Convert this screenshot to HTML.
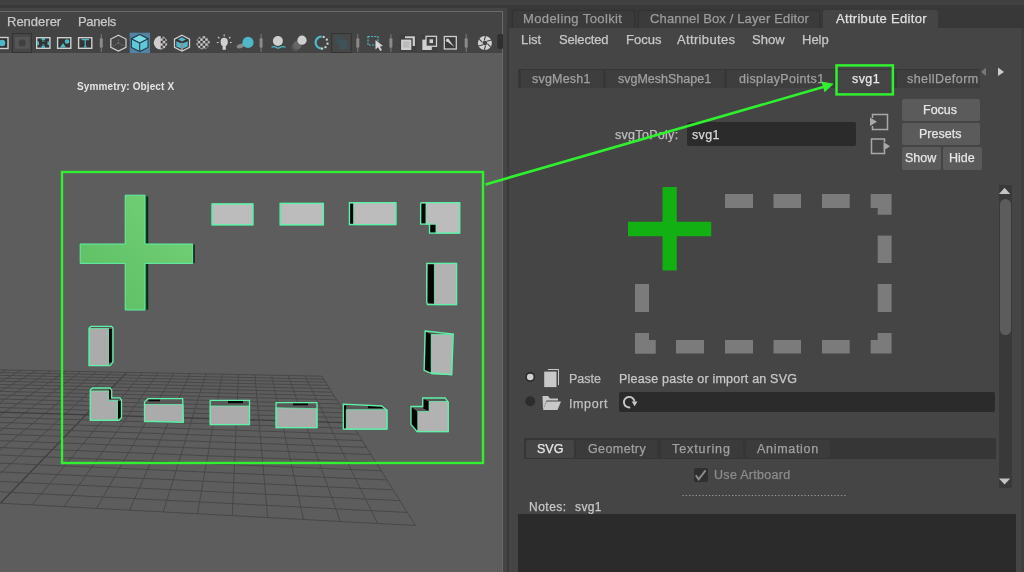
<!DOCTYPE html>
<html><head><meta charset="utf-8">
<style>
*{margin:0;padding:0;box-sizing:border-box}
html,body{width:1024px;height:572px;overflow:hidden;background:#444}
body{position:relative;font-family:"Liberation Sans",sans-serif;color:#c8c8c8}
.a{position:absolute}
.t{position:absolute;white-space:nowrap;line-height:1;will-change:transform;-webkit-text-stroke:0.25px currentColor}
svg{position:absolute;left:0;top:0}
.btn{position:absolute;background:#5b5b5b;border-radius:2px}
</style></head><body>
<!-- top strip -->
<div class="a" style="left:0;top:0;width:1024px;height:4.5px;background:#414141"></div>
<div class="a" style="left:0;top:4.5px;width:1024px;height:3.5px;background:#393939"></div>
<div class="a" style="left:0;top:8px;width:509px;height:3px;background:#444"></div>

<!-- LEFT PANEL -->
<div class="a" style="left:0;top:11px;width:503px;height:1px;background:#6a6a6a"></div>
<div class="a" style="left:502px;top:11px;width:1px;height:561px;background:#6a6a6a"></div>
<div class="a" style="left:0;top:12px;width:502px;height:41px;background:#444"></div>
<div class="a" style="left:0;top:53px;width:502px;height:519px;background:#5d5d5d"></div>
<div class="a" style="left:503px;top:8px;width:4px;height:564px;background:#444"></div>
<div class="a" style="left:507px;top:8px;width:2px;height:564px;background:#3a3a3a"></div>

<div class="t" style="left:7px;top:15px;font-size:13px">Renderer</div>
<div class="t" style="left:78px;top:15px;font-size:13px;letter-spacing:-0.3px">Panels</div>

<!-- toolbar icons -->
<svg width="503" height="60" viewBox="0 0 503 60">
<rect x="-6" y="37.5" width="14" height="11" fill="#2f2f2f" stroke="#cfcfcf" stroke-width="1.4"/>
<circle cx="2" cy="43" r="3.3" fill="#4fb8c8"/>
<rect x="12.5" y="33.5" width="19" height="19" fill="#474747" stroke="#323232" stroke-width="1"/>
<rect x="15" y="36.8" width="14.5" height="12" fill="#555"/>
<circle cx="22.2" cy="43" r="3.6" fill="#404040"/>
<rect x="36.7" y="37.7" width="13.2" height="10.6" fill="#333" stroke="#cfcfcf" stroke-width="1.4"/>
<rect x="41.5" y="38" width="3.5" height="2" fill="#4fb8c8"/><rect x="41.5" y="46" width="3.5" height="2" fill="#4fb8c8"/>
<rect x="37" y="41.5" width="2" height="3.5" fill="#4fb8c8"/><rect x="47.5" y="41.5" width="2" height="3.5" fill="#4fb8c8"/>
<rect x="42" y="40.5" width="2.5" height="1" fill="#4fb8c8"/><rect x="42" y="44.5" width="2.5" height="1" fill="#4fb8c8"/>
<rect x="57.6" y="37.7" width="13.2" height="10.6" fill="#333" stroke="#cfcfcf" stroke-width="1.4"/>
<polygon points="60,47.5 63,43 66,47.5" fill="#4fb8c8"/><circle cx="67" cy="41.5" r="2.3" fill="#4fb8c8"/>
<rect x="78.6" y="37.7" width="13.2" height="10.6" fill="#333" stroke="#cfcfcf" stroke-width="1.4"/>
<path d="M81.5,39.7 H89 M85.2,39.7 V46.8 M83.8,46.8 H86.6" stroke="#4fb8c8" stroke-width="1.2" fill="none"/>
<line x1="101.3" y1="34" x2="101.3" y2="52" stroke="#7a7a7a" stroke-width="1"/><rect x="99.8" y="38.3" width="3" height="9.4" rx="1" fill="#8a8a8a"/>
<polygon points="118.4,35.2 126,39 126,47.3 118.4,51 110.8,47.3 110.8,39" fill="none" stroke="#cfcfcf" stroke-width="1.2"/>
<path d="M118.4,43 V39 M118.4,43 L113,46 M118.4,43 L124,46" stroke="#8c8c8c" stroke-width="0.8" stroke-dasharray="1.2,1.2"/>
<rect x="129.7" y="32.7" width="20.3" height="20.3" fill="#5083a6"/>
<polygon points="139.7,34.5 148,38.7 148,47.5 139.7,51.6 131.4,47.5 131.4,38.7" fill="#5fc9d9" stroke="#2a3c44" stroke-width="1.1"/>
<path d="M131.4,38.7 L139.7,43 L148,38.7 M139.7,43 V51.6" stroke="#2a3c44" stroke-width="1.1" fill="none"/>
<polygon points="139.7,34.5 148,38.7 139.7,43 131.4,38.7" fill="#7adbe8"/>
<path d="M131.4,38.7 L139.7,34.5 L148,38.7 L139.7,43 Z" stroke="#2a3c44" stroke-width="1.1" fill="none"/>
<defs><pattern id="chk" x="0.3" y="0.8" width="5" height="5" patternUnits="userSpaceOnUse"><rect width="5" height="5" fill="#d0d0d0"/><rect width="2.5" height="2.5" fill="#333"/><rect x="2.5" y="2.5" width="2.5" height="2.5" fill="#333"/></pattern><clipPath id="cl1"><circle cx="160.6" cy="42.8" r="6.8"/></clipPath><clipPath id="cl2"><circle cx="203" cy="42.8" r="6.8"/></clipPath></defs>
<g clip-path="url(#cl1)"><rect x="153" y="35" width="16" height="16" fill="url(#chk)"/><rect x="153" y="35" width="7.6" height="16" fill="#cfcfcf"/></g>
<polygon points="182,35.2 189.5,39.2 189.5,47.3 182,51 174.5,47.3 174.5,39.2" fill="#333" stroke="#cfcfcf" stroke-width="1.3"/>
<polygon points="182,37.3 186,39.5 182,41.6 178,39.5" fill="#4fb8c8"/>
<polygon points="176.3,41.2 181,43.3 181,48.5 176.3,46.4" fill="#4fb8c8"/><polygon points="187.7,41.2 183,43.3 183,48.5 187.7,46.4" fill="#4fb8c8"/>
<path d="M182,42.8 V50.5" stroke="#cfcfcf" stroke-width="1.2"/>
<g clip-path="url(#cl2)"><rect x="195" y="35" width="16" height="16" fill="url(#chk)"/></g>
<ellipse cx="224.2" cy="42" rx="3.6" ry="4.2" fill="#cfcfcf"/><rect x="222.6" y="45" width="3.2" height="4.8" fill="#cfcfcf"/>
<path d="M224.2,34.5 V36.2 M218,37 L219.4,38.3 M230.4,37 L229,38.3 M216.8,42.5 H218.5 M230,42.5 H231.6" stroke="#cfcfcf" stroke-width="1.1"/>
<ellipse cx="240.5" cy="46" rx="4" ry="2" fill="#888" transform="rotate(-20 240.5 46)"/>
<circle cx="248" cy="42.4" r="5.6" fill="#4fb8c8"/>
<line x1="261.1" y1="34" x2="261.1" y2="52" stroke="#7a7a7a" stroke-width="1"/><rect x="259.6" y="38.3" width="3" height="9.4" rx="1" fill="#8a8a8a"/>
<circle cx="277.9" cy="41" r="5" fill="#cfcfcf"/>
<path d="M271.5,47.3 Q274,45.8 276,47.3 T280.5,47.3 T285.5,47.3" stroke="#4fb8c8" stroke-width="1.3" fill="none"/>
<circle cx="295.5" cy="47" r="4.2" fill="#555"/><circle cx="297.5" cy="45" r="4.2" fill="#666"/><circle cx="302" cy="40.2" r="4.6" fill="#cfcfcf"/>
<path d="M321.6,36.6 A6,6 0 0 0 321.6,48.6" stroke="#4fb8c8" stroke-width="2.2" fill="none"/>
<rect x="322.65212085995404" y="35.96184427528455" width="2" height="2" fill="#d8d8d8"/>
<rect x="325.79615242270665" y="38.6" width="2" height="2" fill="#d8d8d8"/>
<rect x="326.50884651807326" y="42.64188906600158" width="2" height="2" fill="#d8d8d8"/>
<rect x="324.45672565811924" y="46.19626665871387" width="2" height="2" fill="#d8d8d8"/>
<rect x="321.12293445648595" y="47.57716818855047" width="2" height="2" fill="#d8d8d8"/>
<rect x="331.7" y="33.5" width="19.5" height="19" fill="#474747" stroke="#323232" stroke-width="1"/>
<rect x="335.5" y="36.5" width="7" height="7" fill="#3d4f54"/><rect x="339" y="40" width="8.5" height="9" fill="#3e5257"/>
<line x1="357.8" y1="34" x2="357.8" y2="52" stroke="#7a7a7a" stroke-width="1"/><rect x="356.3" y="38.3" width="3" height="9.4" rx="1" fill="#8a8a8a"/>
<rect x="368" y="36.5" width="10" height="8.5" fill="none" stroke="#4fb8c8" stroke-width="1.2" stroke-dasharray="2,1.2"/>
<polygon points="375.5,40 375.5,49.5 378,47.3 380.3,51 382,50 379.8,46.5 383,46" fill="#d8d8d8"/>
<line x1="390.9" y1="34" x2="390.9" y2="52" stroke="#7a7a7a" stroke-width="1"/><rect x="389.4" y="38.3" width="3" height="9.4" rx="1" fill="#8a8a8a"/>
<rect x="399.7" y="34.7" width="16.8" height="17" fill="#3f3f3f"/>
<rect x="405" y="36.3" width="9.9" height="9.7" fill="#cfcfcf"/><rect x="403.2" y="38.2" width="9.5" height="9.5" fill="#3f3f3f"/>
<rect x="401.1" y="39.6" width="10.2" height="10.4" fill="#cfcfcf"/><rect x="403" y="41.2" width="6.5" height="6.5" fill="#bbb"/>
<rect x="421" y="34.7" width="17" height="17" fill="#3f3f3f"/>
<rect x="422.3" y="39.6" width="9.5" height="10.4" fill="#cfcfcf"/>
<rect x="426" y="36.3" width="10.5" height="10" fill="#3f3f3f" stroke="#cfcfcf" stroke-width="1.3"/><rect x="429.5" y="39.3" width="3.5" height="3.8" fill="#cfcfcf"/>
<rect x="443.6" y="35.8" width="13.4" height="13.9" fill="#3a3a3a"/><rect x="444.3" y="36.5" width="12" height="12.5" fill="none" stroke="#cfcfcf" stroke-width="1.3"/>
<circle cx="447.6" cy="40.2" r="1.7" fill="#cfcfcf"/><polygon points="446.8,41.3 448.8,39.5 454.5,47 " fill="#cfcfcf"/>
<line x1="466.2" y1="34" x2="466.2" y2="52" stroke="#7a7a7a" stroke-width="1"/><rect x="464.7" y="38.3" width="3" height="9.4" rx="1" fill="#8a8a8a"/>
<circle cx="484.9" cy="43" r="7" fill="#d2d2d2"/>
<line x1="487.41" y1="43.67" x2="490.79" y2="47.14" stroke="#444" stroke-width="1.1"/>
<line x1="485.57" y1="45.51" x2="484.27" y2="50.17" stroke="#444" stroke-width="1.1"/>
<line x1="483.06" y1="44.84" x2="478.37" y2="46.04" stroke="#444" stroke-width="1.1"/>
<line x1="482.39" y1="42.33" x2="479.01" y2="38.86" stroke="#444" stroke-width="1.1"/>
<line x1="484.23" y1="40.49" x2="485.53" y2="35.83" stroke="#444" stroke-width="1.1"/>
<line x1="486.74" y1="41.16" x2="491.43" y2="39.96" stroke="#444" stroke-width="1.1"/>
<circle cx="484.9" cy="43" r="2.3" fill="#444"/>
<rect x="497.3" y="34" width="6" height="15" rx="2" fill="#2f2f2f"/>
</svg>

<!-- viewport -->
<svg width="503" height="572" viewBox="0 0 503 572">
<g clip-path="url(#vpclip)">
<defs><clipPath id="vpclip"><rect x="0" y="53" width="502" height="519"/></clipPath></defs>
<line x1="322.00" y1="376.20" x2="415.49" y2="525.50" stroke="#484848" stroke-width="1"/>
<line x1="305.03" y1="375.87" x2="377.56" y2="523.46" stroke="#484848" stroke-width="1"/>
<line x1="288.19" y1="375.54" x2="340.29" y2="521.46" stroke="#484848" stroke-width="1"/>
<line x1="271.48" y1="375.21" x2="303.67" y2="519.49" stroke="#484848" stroke-width="1"/>
<line x1="254.90" y1="374.89" x2="267.67" y2="517.56" stroke="#484848" stroke-width="1"/>
<line x1="238.46" y1="374.57" x2="232.28" y2="515.65" stroke="#484848" stroke-width="1"/>
<line x1="222.15" y1="374.25" x2="197.48" y2="513.79" stroke="#484848" stroke-width="1"/>
<line x1="205.96" y1="373.93" x2="163.27" y2="511.95" stroke="#484848" stroke-width="1"/>
<line x1="189.90" y1="373.61" x2="129.62" y2="510.14" stroke="#484848" stroke-width="1"/>
<line x1="173.97" y1="373.30" x2="96.52" y2="508.36" stroke="#484848" stroke-width="1"/>
<line x1="158.16" y1="372.99" x2="63.96" y2="506.61" stroke="#484848" stroke-width="1"/>
<line x1="142.47" y1="372.68" x2="31.93" y2="504.89" stroke="#484848" stroke-width="1"/>
<line x1="126.90" y1="372.38" x2="0.40" y2="503.20" stroke="#3d3d3d" stroke-width="1.3"/>
<line x1="111.45" y1="372.08" x2="-30.62" y2="501.53" stroke="#484848" stroke-width="1"/>
<line x1="96.12" y1="371.78" x2="-61.15" y2="499.89" stroke="#484848" stroke-width="1"/>
<line x1="80.90" y1="371.48" x2="-91.20" y2="498.28" stroke="#484848" stroke-width="1"/>
<line x1="65.80" y1="371.18" x2="-120.79" y2="496.69" stroke="#484848" stroke-width="1"/>
<line x1="50.82" y1="370.89" x2="-149.93" y2="495.13" stroke="#484848" stroke-width="1"/>
<line x1="35.95" y1="370.60" x2="-178.61" y2="493.59" stroke="#484848" stroke-width="1"/>
<line x1="21.18" y1="370.31" x2="-206.87" y2="492.07" stroke="#484848" stroke-width="1"/>
<line x1="6.53" y1="370.02" x2="-234.70" y2="490.57" stroke="#484848" stroke-width="1"/>
<line x1="-8.01" y1="369.74" x2="-262.11" y2="489.10" stroke="#484848" stroke-width="1"/>
<line x1="-22.45" y1="369.45" x2="-289.12" y2="487.65" stroke="#484848" stroke-width="1"/>
<line x1="-36.77" y1="369.17" x2="-315.73" y2="486.22" stroke="#484848" stroke-width="1"/>
<line x1="-51.00" y1="368.89" x2="-341.95" y2="484.81" stroke="#484848" stroke-width="1"/>
<line x1="322.00" y1="376.20" x2="-51.00" y2="368.89" stroke="#484848" stroke-width="1"/>
<line x1="323.82" y1="379.10" x2="-57.23" y2="371.38" stroke="#484848" stroke-width="1"/>
<line x1="325.72" y1="382.14" x2="-63.73" y2="373.96" stroke="#484848" stroke-width="1"/>
<line x1="327.71" y1="385.32" x2="-70.51" y2="376.67" stroke="#484848" stroke-width="1"/>
<line x1="329.81" y1="388.66" x2="-77.61" y2="379.49" stroke="#484848" stroke-width="1"/>
<line x1="332.01" y1="392.18" x2="-85.03" y2="382.45" stroke="#484848" stroke-width="1"/>
<line x1="334.32" y1="395.87" x2="-92.80" y2="385.55" stroke="#484848" stroke-width="1"/>
<line x1="336.76" y1="399.77" x2="-100.95" y2="388.79" stroke="#484848" stroke-width="1"/>
<line x1="339.34" y1="403.89" x2="-109.50" y2="392.20" stroke="#484848" stroke-width="1"/>
<line x1="342.06" y1="408.24" x2="-118.48" y2="395.78" stroke="#484848" stroke-width="1"/>
<line x1="344.95" y1="412.84" x2="-127.94" y2="399.55" stroke="#484848" stroke-width="1"/>
<line x1="348.00" y1="417.72" x2="-137.90" y2="403.52" stroke="#484848" stroke-width="1"/>
<line x1="351.25" y1="422.91" x2="-148.41" y2="407.70" stroke="#3d3d3d" stroke-width="1.3"/>
<line x1="354.71" y1="428.43" x2="-159.52" y2="412.13" stroke="#484848" stroke-width="1"/>
<line x1="358.40" y1="434.32" x2="-171.27" y2="416.81" stroke="#484848" stroke-width="1"/>
<line x1="362.34" y1="440.61" x2="-183.73" y2="421.77" stroke="#484848" stroke-width="1"/>
<line x1="366.56" y1="447.36" x2="-196.96" y2="427.04" stroke="#484848" stroke-width="1"/>
<line x1="371.09" y1="454.60" x2="-211.03" y2="432.65" stroke="#484848" stroke-width="1"/>
<line x1="375.98" y1="462.39" x2="-226.03" y2="438.63" stroke="#484848" stroke-width="1"/>
<line x1="381.25" y1="470.81" x2="-242.06" y2="445.01" stroke="#484848" stroke-width="1"/>
<line x1="386.96" y1="479.93" x2="-259.21" y2="451.85" stroke="#484848" stroke-width="1"/>
<line x1="393.16" y1="489.84" x2="-277.63" y2="459.19" stroke="#484848" stroke-width="1"/>
<line x1="399.93" y1="500.65" x2="-297.44" y2="467.08" stroke="#484848" stroke-width="1"/>
<line x1="407.34" y1="512.48" x2="-318.81" y2="475.60" stroke="#484848" stroke-width="1"/>
<line x1="415.49" y1="525.50" x2="-341.95" y2="484.81" stroke="#484848" stroke-width="1"/>
</g>
<rect x="145" y="196" width="3.4" height="114" fill="#1d4d2a"/><rect x="146.6" y="197" width="1.2" height="112" fill="#0a1a0e"/>
<rect x="192.7" y="244.5" width="2" height="18.5" fill="#0a1a0e"/>
<defs><linearGradient id="pg" x1="1" y1="0" x2="0" y2="1"><stop offset="0" stop-color="#74d278"/><stop offset="1" stop-color="#5cbd62"/></linearGradient></defs>
<path d="M125.2,195.2 H145 V244 H192.7 V263.4 H145 V310 H125.2 V263.4 H80.2 V244 H125.2 Z" fill="url(#pg)" stroke="#5ef2a8" stroke-width="1"/>
<polygon points="212.1,203.9 252.9,203.9 252.9,224.9 212.1,224.9" fill="#585858"/>
<polygon points="212.1,203.9 252.9,203.9 252.9,224.9 212.1,224.9" fill="#bcbcbc"/>
<polygon points="212.1,203.9 252.9,203.9 252.9,224.9 212.1,224.9" fill="none" stroke="#5ef2a8" stroke-width="0.9" stroke-opacity="0.85"/>
<polygon points="212.1,203.9 252.9,203.9 252.9,224.9 212.1,224.9" fill="none" stroke="#5ef2a8" stroke-width="1.3"/>
<polygon points="280.1,203.3 323.4,203.3 323.4,224.9 280.1,224.9" fill="#585858"/>
<polygon points="280.6,203.3 323.2,203.3 323.2,224.9 280.6,224.9" fill="#bcbcbc"/>
<polygon points="280.6,203.3 323.2,203.3 323.2,224.9 280.6,224.9" fill="none" stroke="#5ef2a8" stroke-width="0.9" stroke-opacity="0.85"/>
<polygon points="280.1,203.3 323.4,203.3 323.4,224.9 280.1,224.9" fill="none" stroke="#5ef2a8" stroke-width="1.3"/>
<polygon points="349.4,202.6 395.9,202.6 395.9,224.7 349.4,224.7" fill="#585858"/>
<polygon points="350.2,204.0 353.5,204.0 353.5,223.5 350.2,223.5" fill="#050505"/>
<polygon points="353.7,202.6 395.9,202.6 395.9,224.7 353.7,224.7" fill="#bcbcbc"/>
<polygon points="353.7,202.6 395.9,202.6 395.9,224.7 353.7,224.7" fill="none" stroke="#5ef2a8" stroke-width="0.9" stroke-opacity="0.85"/>
<polygon points="349.4,202.6 395.9,202.6 395.9,224.7 349.4,224.7" fill="none" stroke="#5ef2a8" stroke-width="1.3"/>
<polygon points="420.6,203.5 421.5,202.6 459.7,202.6 459.7,233.2 429.5,233.2 429.5,224.2 420.6,224.2" fill="#585858"/>
<polygon points="421.3,204.0 425.8,204.0 425.8,223.5 421.3,223.5" fill="#050505"/>
<polygon points="430.2,224.8 435.8,224.8 435.8,232.6 430.2,232.6" fill="#050505"/>
<polygon points="426.0,202.6 459.7,202.6 459.7,233.2 436.0,233.2 436.0,224.2 426.0,224.2" fill="#bcbcbc"/>
<polygon points="426.0,202.6 459.7,202.6 459.7,233.2 436.0,233.2 436.0,224.2 426.0,224.2" fill="none" stroke="#5ef2a8" stroke-width="0.9" stroke-opacity="0.85"/>
<polygon points="420.6,203.5 421.5,202.6 459.7,202.6 459.7,233.2 429.5,233.2 429.5,224.2 420.6,224.2" fill="none" stroke="#5ef2a8" stroke-width="1.3"/>
<polygon points="426.7,263.4 456.6,263.4 456.6,304.7 427.5,304.7 426.7,302.0" fill="#585858"/>
<polygon points="428.0,264.5 434.2,264.5 434.2,303.5 427.3,302.5" fill="#050505"/>
<polygon points="434.4,263.4 456.6,263.4 456.6,304.7 434.4,304.7" fill="#b2b2b2"/>
<polygon points="434.4,263.4 456.6,263.4 456.6,304.7 434.4,304.7" fill="none" stroke="#5ef2a8" stroke-width="0.9" stroke-opacity="0.85"/>
<polygon points="426.7,263.4 456.6,263.4 456.6,304.7 427.5,304.7 426.7,302.0" fill="none" stroke="#5ef2a8" stroke-width="1.3"/>
<polygon points="425.1,331.0 453.3,334.1 451.7,374.7 429.1,372.7 424.1,370.3" fill="#585858"/>
<polygon points="425.8,332.0 431.0,334.3 431.0,373.0 425.0,370.0" fill="#050505"/>
<polygon points="431.2,334.5 452.5,334.5 451.7,374.7 431.2,374.0" fill="#b2b2b2"/>
<polygon points="431.2,334.5 452.5,334.5 451.7,374.7 431.2,374.0" fill="none" stroke="#5ef2a8" stroke-width="0.9" stroke-opacity="0.85"/>
<polygon points="425.1,331.0 453.3,334.1 451.7,374.7 429.1,372.7 424.1,370.3" fill="none" stroke="#5ef2a8" stroke-width="1.3"/>
<polygon points="422.7,398.0 445.2,398.0 448.3,402.5 448.3,431.7 417.1,431.7 411.0,424.6 411.0,406.5 422.7,406.5" fill="#585858"/>
<polygon points="423.3,399.0 428.9,401.5 428.9,411.0 423.3,408.5" fill="#050505"/>
<polygon points="429.1,401.5 448.3,401.5 448.3,431.7 417.5,431.7 417.5,411.5 429.1,411.5" fill="#b2b2b2"/>
<polygon points="429.1,401.5 448.3,401.5 448.3,431.7 417.5,431.7 417.5,411.5 429.1,411.5" fill="none" stroke="#5ef2a8" stroke-width="0.9" stroke-opacity="0.85"/>
<polygon points="422.7,398.0 445.2,398.0 448.3,402.5 448.3,431.7 417.1,431.7 411.0,424.6 411.0,406.5 422.7,406.5" fill="none" stroke="#5ef2a8" stroke-width="1.3"/>
<polygon points="411.8,407.2 417.3,411.5 417.3,430.5 411.8,424.0" fill="#050505"/>
<polygon points="343.3,404.2 381.7,406.0 387.0,410.3 387.0,429.2 343.3,429.2" fill="#585858"/>
<polygon points="343.9,405.5 346.2,405.5 346.2,428.3 343.9,428.3" fill="#050505"/>
<polygon points="368.0,406.0 383.0,406.0 383.0,408.2 368.0,408.2" fill="#050505"/>
<polygon points="346.3,409.7 387.0,409.7 387.0,429.2 346.3,429.2" fill="#ababab"/>
<polygon points="346.3,409.7 387.0,409.7 387.0,429.2 346.3,429.2" fill="none" stroke="#5ef2a8" stroke-width="0.9" stroke-opacity="0.85"/>
<polygon points="343.3,404.2 381.7,406.0 387.0,410.3 387.0,429.2 343.3,429.2" fill="none" stroke="#5ef2a8" stroke-width="1.3"/>
<polygon points="276.1,402.6 317.0,402.6 317.0,427.7 276.1,427.7" fill="#585858"/>
<polygon points="293.0,403.3 308.0,403.3 308.0,405.3 293.0,405.3" fill="#050505"/>
<polygon points="276.1,407.8 317.0,408.7 317.0,427.7 276.1,427.7" fill="#ababab"/>
<polygon points="276.1,407.8 317.0,408.7 317.0,427.7 276.1,427.7" fill="none" stroke="#5ef2a8" stroke-width="0.9" stroke-opacity="0.85"/>
<polygon points="276.1,402.6 317.0,402.6 317.0,427.7 276.1,427.7" fill="none" stroke="#5ef2a8" stroke-width="1.3"/>
<polygon points="210.2,400.4 249.5,400.4 249.5,424.6 210.2,424.6" fill="#585858"/>
<polygon points="228.0,401.0 243.0,401.0 243.0,403.2 228.0,403.2" fill="#050505"/>
<polygon points="210.2,406.0 249.5,406.0 249.5,424.6 210.2,424.6" fill="#ababab"/>
<polygon points="210.2,406.0 249.5,406.0 249.5,424.6 210.2,424.6" fill="none" stroke="#5ef2a8" stroke-width="0.9" stroke-opacity="0.85"/>
<polygon points="210.2,400.4 249.5,400.4 249.5,424.6 210.2,424.6" fill="none" stroke="#5ef2a8" stroke-width="1.3"/>
<polygon points="144.5,402.1 147.9,398.7 182.7,398.7 183.3,422.3 144.5,421.2" fill="#585858"/>
<polygon points="148.5,399.4 160.0,399.4 160.0,401.3 148.5,401.3" fill="#050505"/>
<polygon points="144.5,404.5 183.0,404.5 183.0,421.8 144.5,421.8" fill="#ababab"/>
<polygon points="144.5,404.5 183.0,404.5 183.0,421.8 144.5,421.8" fill="none" stroke="#5ef2a8" stroke-width="0.9" stroke-opacity="0.85"/>
<polygon points="144.5,402.1 147.9,398.7 182.7,398.7 183.3,422.3 144.5,421.2" fill="none" stroke="#5ef2a8" stroke-width="1.3"/>
<polygon points="90.3,390.0 92.5,388.0 110.0,388.0 111.7,390.0 111.7,397.9 120.0,397.9 121.5,400.0 121.5,417.5 119.0,420.3 90.3,420.3" fill="#585858"/>
<polygon points="109.0,389.5 111.2,389.5 111.2,399.0 109.0,399.0" fill="#050505"/>
<polygon points="118.0,401.0 121.0,401.0 121.0,418.5 118.0,418.5" fill="#050505"/>
<polygon points="90.3,391.0 108.5,391.0 108.5,400.5 117.5,400.5 117.5,420.3 90.3,420.3" fill="#ababab"/>
<polygon points="90.3,391.0 108.5,391.0 108.5,400.5 117.5,400.5 117.5,420.3 90.3,420.3" fill="none" stroke="#5ef2a8" stroke-width="0.9" stroke-opacity="0.85"/>
<polygon points="90.3,390.0 92.5,388.0 110.0,388.0 111.7,390.0 111.7,397.9 120.0,397.9 121.5,400.0 121.5,417.5 119.0,420.3 90.3,420.3" fill="none" stroke="#5ef2a8" stroke-width="1.3"/>
<polygon points="89.0,328.3 91.0,326.4 111.6,326.4 113.0,328.0 113.0,362.0 110.0,365.7 89.0,365.7" fill="#585858"/>
<polygon points="109.0,329.0 111.8,329.0 111.8,362.5 109.0,362.5" fill="#050505"/>
<polygon points="89.5,328.5 108.5,328.5 108.5,365.5 89.5,365.5" fill="#ababab"/>
<polygon points="89.5,328.5 108.5,328.5 108.5,365.5 89.5,365.5" fill="none" stroke="#5ef2a8" stroke-width="0.9" stroke-opacity="0.85"/>
<polygon points="89.0,328.3 91.0,326.4 111.6,326.4 113.0,328.0 113.0,362.0 110.0,365.7 89.0,365.7" fill="none" stroke="#5ef2a8" stroke-width="1.3"/>
</svg>

<div class="t" style="left:77.3px;top:82px;font-size:10px;font-weight:bold;color:#e4e4e4;letter-spacing:0.12px;-webkit-text-stroke:0">Symmetry: Object X</div>

<!-- RIGHT PANEL -->
<div class="a" style="left:509px;top:8px;width:515px;height:20px;background:#383838"></div>
<div class="a" style="left:509px;top:28px;width:515px;height:544px;background:#454545"></div>
<div class="a" style="left:1021.3px;top:28px;width:3px;height:544px;background:#3f3f3f"></div>

<div class="a" style="left:511.5px;top:10.3px;width:123.5px;height:17.7px;background:#3b3b3b;border:1px solid #323232;border-bottom:0;border-radius:3px 3px 0 0"></div>
<div class="a" style="left:637.5px;top:10.3px;width:182.5px;height:17.7px;background:#3b3b3b;border:1px solid #323232;border-bottom:0;border-radius:3px 3px 0 0"></div>
<div class="a" style="left:823px;top:10px;width:115px;height:18px;background:#454545;border-radius:3px 3px 0 0"></div>
<div class="t" style="left:523px;top:12.3px;font-size:13px;color:#9c9c9c;letter-spacing:0.4px">Modeling Toolkit</div>
<div class="t" style="left:650px;top:12.3px;font-size:13px;color:#9c9c9c;letter-spacing:0.14px">Channel Box / Layer Editor</div>
<div class="t" style="left:836px;top:12.3px;font-size:13px;color:#e0e0e0;letter-spacing:0.3px">Attribute Editor</div>

<div class="t" style="left:521px;top:33px;font-size:13px">List</div>
<div class="t" style="left:559px;top:33px;font-size:13px;letter-spacing:-0.15px">Selected</div>
<div class="t" style="left:626px;top:33px;font-size:13px">Focus</div>
<div class="t" style="left:677px;top:33px;font-size:13px;letter-spacing:0.35px">Attributes</div>
<div class="t" style="left:752px;top:33px;font-size:13px">Show</div>
<div class="t" style="left:802px;top:33px;font-size:13px">Help</div>

<!-- node tabs -->
<div class="a" style="left:518.3px;top:68.5px;width:462px;height:19.5px;background:#373737"></div>
<div class="a" style="left:521px;top:70px;width:82px;height:18px;background:#3e3e3e"></div>
<div class="a" style="left:606px;top:70px;width:118px;height:18px;background:#3e3e3e"></div>
<div class="a" style="left:727px;top:70px;width:107px;height:18px;background:#3e3e3e"></div>
<div class="a" style="left:837px;top:70px;width:57px;height:18px;background:#454545"></div>
<div class="a" style="left:897px;top:70px;width:83px;height:18px;background:#3e3e3e"></div>
<div class="t" style="left:532px;top:73px;font-size:12.5px;color:#a0a0a0;letter-spacing:0.2px">svgMesh1</div>
<div class="t" style="left:618px;top:73px;font-size:12.5px;color:#a0a0a0">svgMeshShape1</div>
<div class="t" style="left:739px;top:73px;font-size:12.5px;color:#a0a0a0;letter-spacing:0.35px">displayPoints1</div>
<div class="t" style="left:851.5px;top:73px;font-size:12.5px;color:#e8e8e8;letter-spacing:0.4px">svg1</div>
<div class="t" style="left:907px;top:73px;font-size:12.5px;color:#a0a0a0;letter-spacing:0.45px">shellDeform</div>
<svg width="1024" height="100">
<polygon points="981,72 986,67.5 986,76" fill="#777"/>
<polygon points="998,67.5 1004,72 998,76" fill="#ccc"/>
</svg>

<!-- svgToPoly row -->
<div class="t" style="left:615px;top:129px;font-size:12.5px;color:#bdbdbd;letter-spacing:0.3px">svgToPoly:</div>
<div class="a" style="left:687px;top:122px;width:169px;height:24px;background:#2b2b2b;border-radius:2px"></div>
<div class="t" style="left:691.5px;top:129px;font-size:12.5px;color:#d8d8d8;letter-spacing:0.35px">svg1</div>

<svg width="1024" height="200">
<path d="M872.5,118 V114.5 H887.5 V129.5 H872.5 V126" fill="none" stroke="#a8a8a8" stroke-width="1.5"/>
<polygon points="870,117.5 877,121.8 870,126" fill="#a8a8a8"/>
<path d="M884.5,142 V139 H871.5 V153.5 H884.5 V150" fill="none" stroke="#a8a8a8" stroke-width="1.5"/>
<polygon points="883.5,142 890,146.3 883.5,150.7" fill="#a8a8a8"/>
</svg>

<div class="btn" style="left:902px;top:99px;width:78px;height:22px"></div>
<div class="btn" style="left:902px;top:123px;width:78px;height:22px"></div>
<div class="btn" style="left:902px;top:147px;width:39px;height:23px"></div>
<div class="btn" style="left:943px;top:147px;width:39px;height:23px"></div>
<div class="t" style="left:923px;top:104px;font-size:12.5px;color:#e6e6e6">Focus</div>
<div class="t" style="left:919px;top:128px;font-size:12.5px;color:#e6e6e6">Presets</div>
<div class="t" style="left:905px;top:152px;font-size:12.5px;color:#e6e6e6">Show</div>
<div class="t" style="left:949px;top:152px;font-size:12.5px;color:#e6e6e6">Hide</div>

<!-- svg preview -->
<svg width="1024" height="572">
<rect x="662.5" y="187" width="14.25" height="83.5" fill="#13b013"/>
<rect x="628" y="221.75" width="83.25" height="14.5" fill="#13b013"/>
<g fill="#7b7b7b">
<rect x="725" y="194" width="28" height="14"/>
<rect x="773.5" y="194" width="27.5" height="14"/>
<rect x="822" y="194" width="27.7" height="14"/>
<path d="M870.7,194 H891.6 V214.7 H877.7 V208 H870.7 Z"/>
<rect x="877.7" y="235.6" width="13.9" height="27.4"/>
<rect x="877.7" y="284" width="13.9" height="28"/>
<path d="M877.7,333 H891.6 V353.5 H870.7 V340 H877.7 Z"/>
<rect x="822" y="340" width="27.7" height="13.5"/>
<rect x="773.5" y="340" width="27.5" height="13.5"/>
<rect x="725" y="340" width="28" height="13.5"/>
<rect x="676" y="340" width="28" height="13.5"/>
<path d="M635,333 H649 V340 H655.75 V353.75 H635 Z"/>
<rect x="635" y="284" width="14" height="28"/>
</g>
</svg>

<!-- scrollbar -->
<div class="a" style="left:999px;top:185px;width:13px;height:303px;background:#393939"></div>
<div class="a" style="left:999.7px;top:199.4px;width:11.5px;height:136px;background:#5c5c5c;border-radius:5.75px"></div>
<svg width="1024" height="572">
<polygon points="1004.6,187.8 1010.2,194.1 999,194.1" fill="#c4c4c4"/>
<polygon points="999,478.5 1010.2,478.5 1004.6,484.6" fill="#c4c4c4"/>
</svg>

<!-- paste / import -->
<svg width="1024" height="572">
<circle cx="530.2" cy="377" r="5" fill="#2b2b2b"/>
<circle cx="530.2" cy="377" r="3.3" fill="#d0d0d0"/>
<circle cx="530.2" cy="401.3" r="5" fill="#2d2d2d"/>
<path d="M548,369.5 H558.5 V385" fill="none" stroke="#c8c8c8" stroke-width="1"/>
<rect x="544.2" y="371.6" width="12.3" height="15.5" fill="#c8c8c8"/>
<path d="M542.5,396 H548 L550,398.5 H558 V400.5 H546.5 L543,410 Z" fill="#c8c8c8"/>
<path d="M546.5,401.5 H561 L557.5,410 H543 Z" fill="#c8c8c8"/>
</svg>
<div class="t" style="left:569px;top:372.5px;font-size:12.5px;color:#c0c0c0">Paste</div>
<div class="t" style="left:619px;top:372.5px;font-size:12.5px;color:#c8c8c8;letter-spacing:0.2px">Please paste or import an SVG</div>
<div class="t" style="left:569px;top:397.5px;font-size:12.5px;color:#c0c0c0;letter-spacing:0.6px">Import</div>
<div class="a" style="left:619px;top:392px;width:376px;height:20px;background:#2b2b2b;border-radius:2px"></div>
<svg width="1024" height="572">
<path d="M630.2,407.4 A5.3,5.3 0 1 1 634.5,401.5" fill="none" stroke="#c8c8c8" stroke-width="1.9"/>
<polygon points="631.8,401.6 637.5,401.6 634.6,406.3" fill="#c8c8c8"/>
</svg>

<!-- bottom tabs -->
<div class="a" style="left:523.6px;top:438px;width:472.5px;height:20.5px;background:#363636"></div>
<div class="a" style="left:525.6px;top:440.2px;width:48.4px;height:17.6px;background:#454545;border-radius:2px 2px 0 0"></div>
<div class="a" style="left:576px;top:440.2px;width:81px;height:17.6px;background:#3b3b3b;border-radius:2px 2px 0 0"></div>
<div class="a" style="left:660.6px;top:440.2px;width:82.4px;height:17.6px;background:#3b3b3b;border-radius:2px 2px 0 0"></div>
<div class="a" style="left:745.5px;top:440.2px;width:84.3px;height:17.6px;background:#3b3b3b;border-radius:2px 2px 0 0"></div>
<div class="t" style="left:537px;top:443px;font-size:12.5px;color:#e8e8e8">SVG</div>
<div class="t" style="left:587.5px;top:443px;font-size:12.5px;color:#a0a0a0;letter-spacing:0.4px">Geometry</div>
<div class="t" style="left:672px;top:443px;font-size:12.5px;color:#a0a0a0;letter-spacing:0.9px">Texturing</div>
<div class="t" style="left:757px;top:443px;font-size:12.5px;color:#a0a0a0;letter-spacing:0.7px">Animation</div>

<div class="a" style="left:693.5px;top:468px;width:14px;height:14px;background:#2f2f2f;border-radius:2px"></div>
<svg width="1024" height="572">
<path d="M695.8,475.2 L698.6,479.3 L705.6,470.4" fill="none" stroke="#8c8c8c" stroke-width="1.9"/>
<line x1="682.5" y1="495.5" x2="847" y2="495.5" stroke="#9a9a9a" stroke-width="1" stroke-dasharray="1.3,2"/>
</svg>
<div class="t" style="left:713.5px;top:469px;font-size:12.5px;color:#8c8c8c;letter-spacing:0.3px">Use Artboard</div>

<div class="t" style="left:528.5px;top:501px;font-size:12px;color:#c8c8c8;letter-spacing:0.5px">Notes:</div><div class="t" style="left:574.5px;top:501px;font-size:12px;color:#c8c8c8;letter-spacing:0.4px">svg1</div>
<div class="a" style="left:517.5px;top:514.4px;width:498.6px;height:58px;background:#2b2b2b"></div>

<!-- green annotation -->
<svg width="1024" height="572">
<rect x="62" y="172" width="421" height="291" fill="none" stroke="#30f030" stroke-width="2.4"/>
<line x1="485.5" y1="184.4" x2="825" y2="86.6" stroke="#30f030" stroke-width="2.6"/>
<polygon points="833.8,83.8 821.3,81.6 824.6,92.3" fill="#30f030"/>
<rect x="836.5" y="65.4" width="56.4" height="29" fill="none" stroke="#30f030" stroke-width="2.5"/>
</svg>
</body></html>
